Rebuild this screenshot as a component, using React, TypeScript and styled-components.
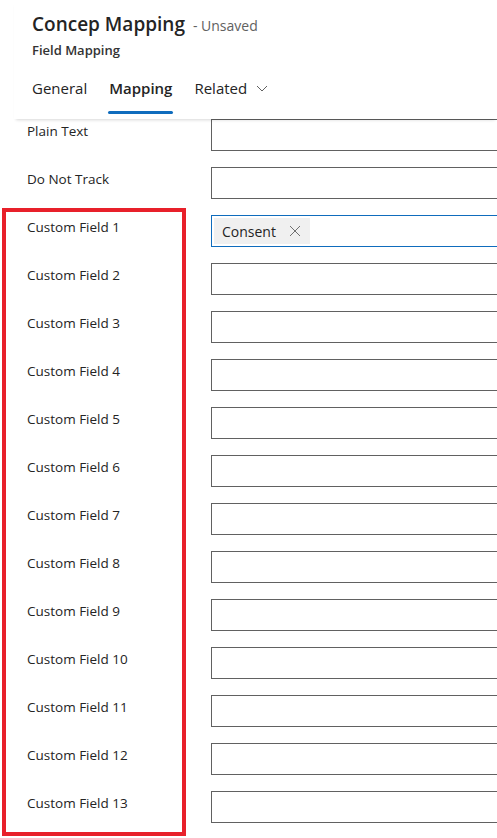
import styled, { createGlobalStyle } from 'styled-components';

const fields = [
    'Plain Text',
    'Do Not Track',
    ...Array.from({ length: 13 }, (_, i) => `Custom Field ${i + 1}`)
];

const GlobalStyle = createGlobalStyle`
    html, body {
        margin: 0;
        padding: 0;
        background: #ffffff;
        overflow: hidden;
    }
    body {
        font-family: 'Segoe UI', 'Open Sans', 'Noto Sans', sans-serif;
        color: #242424;
    }
`;

const App = () => {
    return (
        <Page>
            <GlobalStyle />
            <Header>
                <TitleRow>
                    <Title>Concep Mapping</Title>
                    <Status>- Unsaved</Status>
                </TitleRow>
                <Subtitle>Field Mapping</Subtitle>
                <Tabs>
                    <Tab>General</Tab>
                    <Tab $active>Mapping</Tab>
                    <Tab>
                        Related
                        <svg width="12" height="7" viewBox="0 0 12 7">
                            <polyline
                                points="1,1 6,6 11,1"
                                fill="none"
                                stroke="#616161"
                                strokeWidth="1"
                            />
                        </svg>
                    </Tab>
                </Tabs>
            </Header>
            <Form>
                {fields.map((label) => (
                    <Row key={label}>
                        <Label>{label}</Label>
                        <Input $focused={label === 'Custom Field 1'}>
                            {label === 'Custom Field 1' && (
                                <Chip>
                                    Consent
                                    <svg width="12" height="12" viewBox="0 0 12 12">
                                        <path
                                            d="M1 1 L11 11 M11 1 L1 11"
                                            stroke="#707070"
                                            strokeWidth="1"
                                        />
                                    </svg>
                                </Chip>
                            )}
                        </Input>
                    </Row>
                ))}
                <Highlight />
            </Form>
        </Page>
    );
};

export default App;

const Page = styled.div`
    width: 100%;
    height: 838px;
    overflow: hidden;
`;

const Header = styled.header`
    position: relative;
    z-index: 2;
    margin-left: 14px;
    height: 119px;
    padding-left: 18px;
    box-sizing: border-box;
    background: #ffffff;
    box-shadow: 0 3px 3px -2px rgba(0, 0, 0, 0.16);
    display: flex;
    flex-direction: column;
`;

const TitleRow = styled.div`
    display: flex;
    align-items: baseline;
    gap: 8px;
    padding-top: 11px;
    height: 28px;
`;

const Title = styled.h1`
    margin: 0;
    font-size: 19px;
    font-weight: 600;
    color: #242424;
`;

const Status = styled.span`
    font-size: 14px;
    color: #616161;
`;

const Subtitle = styled.div`
    font-size: 13px;
    font-weight: 600;
    color: #333333;
    margin-top: 2px;
`;

const Tabs = styled.nav`
    display: flex;
    gap: 22px;
    margin-top: 13px;
`;

const Tab = styled.div<{ $active?: boolean }>`
    position: relative;
    display: flex;
    align-items: center;
    gap: 9px;
    height: 32px;
    font-size: 15px;
    font-weight: ${({ $active }) => ($active ? 600 : 400)};
    color: #242424;

    ${({ $active }) =>
        $active &&
        `&::after {
            content: '';
            position: absolute;
            left: -1px;
            right: -1px;
            bottom: -10px;
            height: 3px;
            border-radius: 2px;
            background: #0f6cbd;
        }`}
`;

const Form = styled.div`
    position: relative;
    display: flex;
    flex-direction: column;
    gap: 16px;
`;

const Row = styled.div`
    display: grid;
    grid-template-columns: 184px 1fr;
    padding-left: 27px;
    height: 32px;
`;

const Label = styled.div`
    font-size: 13.5px;
    line-height: 20px;
    padding-top: 2px;
    color: #242424;
`;

const Input = styled.div<{ $focused?: boolean }>`
    box-sizing: border-box;
    height: 32px;
    margin-right: -20px;
    border: 1px solid ${({ $focused }) => ($focused ? '#0f6cbd' : '#616161')};
    display: flex;
    align-items: center;
    padding-left: 2px;
`;

const Chip = styled.div`
    display: flex;
    align-items: center;
    gap: 13px;
    height: 26px;
    padding: 0 9px 0 8px;
    background: #f0f0f0;
    font-size: 14px;
    color: #242424;
`;

const Highlight = styled.div`
    position: absolute;
    left: 2px;
    top: 89px;
    width: 184px;
    height: 628px;
    box-sizing: border-box;
    border: 4px solid #e8202a;
    pointer-events: none;
`;
